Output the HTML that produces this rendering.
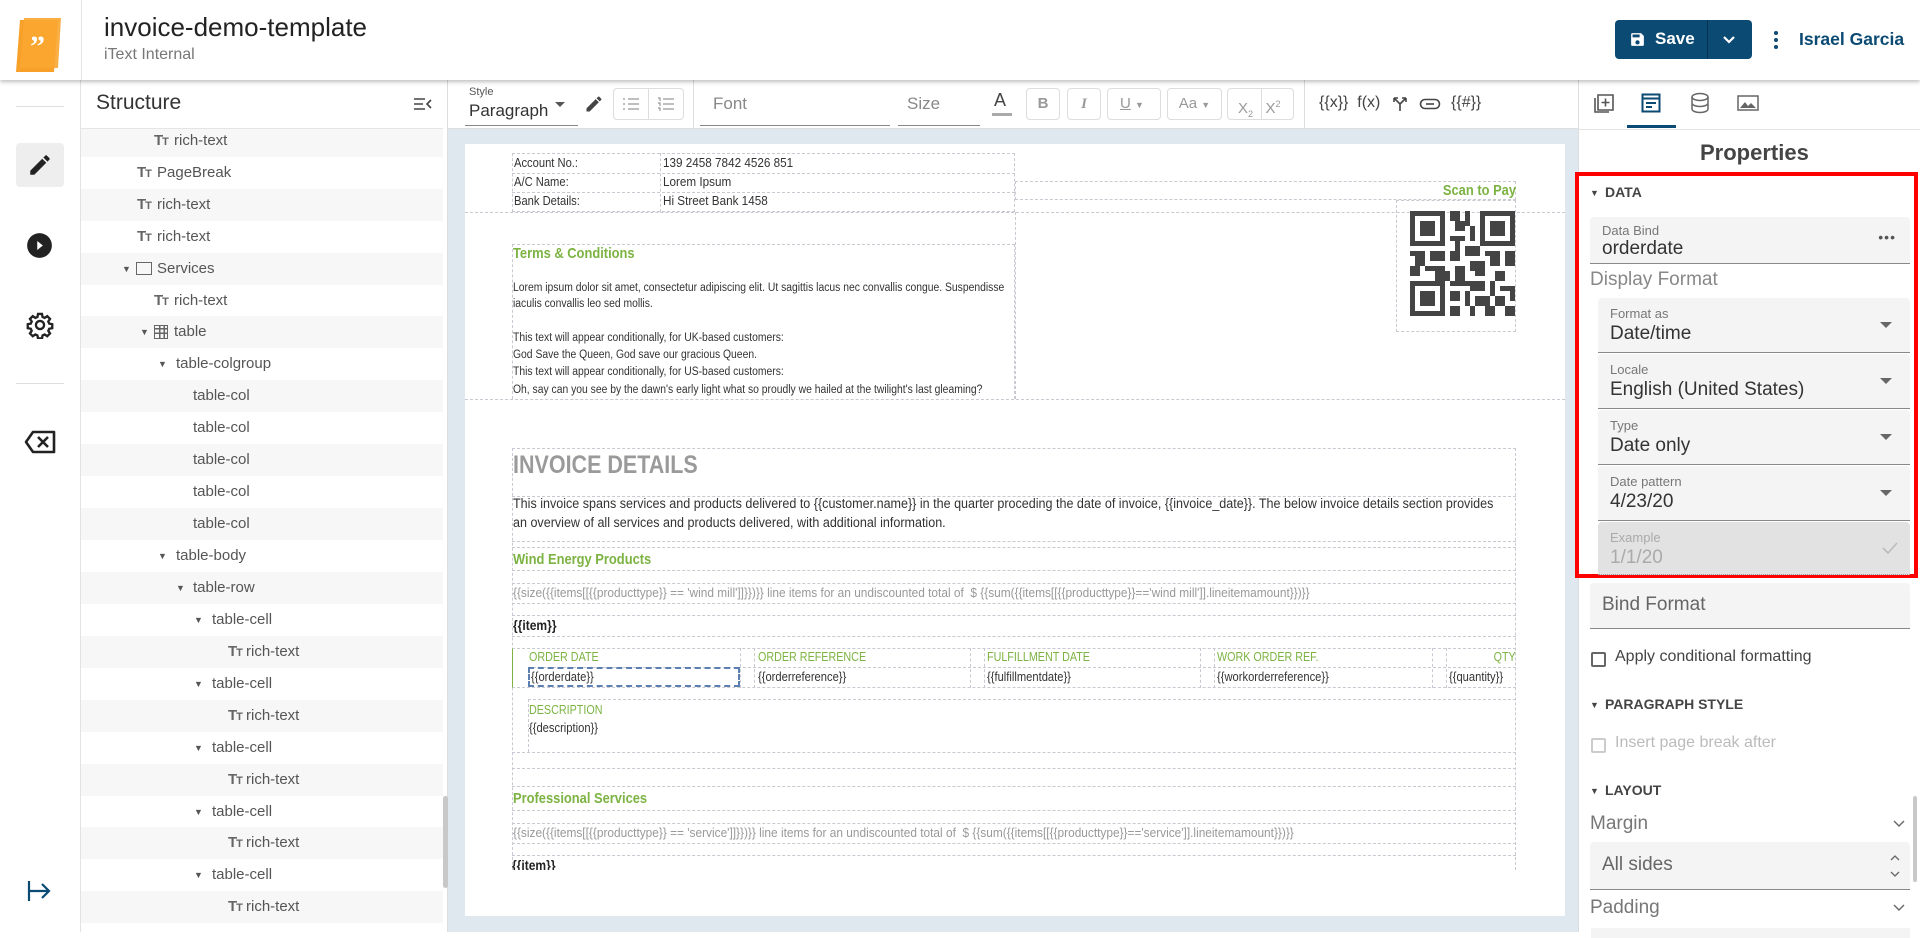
<!DOCTYPE html>
<html><head><meta charset="utf-8">
<style>
*{box-sizing:border-box;margin:0;padding:0}
body{width:1920px;height:932px;overflow:hidden;position:relative;font-family:"Liberation Sans",sans-serif;color:#333;background:#fff}
.a{position:absolute;white-space:nowrap}
.c{transform:scaleX(.86);transform-origin:left center}
.cr{transform:scaleX(.86);transform-origin:right center}
.d{position:absolute;border:1px dashed #c9c9d2}
.g{color:#7cb342;font-weight:bold}
.row{position:absolute;left:81px;width:362px;height:32px;font-size:15px;color:#555;line-height:32px}
.row.o{background:#f7f7f7}
.row span{position:absolute;top:0}
.ar{font-size:9px;color:#555}
.tt{font-weight:bold;color:#666;font-size:15px;letter-spacing:-1px}
.tt small{font-size:11px}
.fld{position:absolute;background:#f4f4f4;border-bottom:1px solid #888;border-radius:4px 4px 0 0}
.fld .l{position:absolute;left:16px;top:8px;font-size:13px;color:#777}
.fld .v{position:absolute;left:16px;top:25px;font-size:19px;color:#333}
.car{position:absolute;right:18px;top:24px;width:0;height:0;border-left:6px solid transparent;border-right:6px solid transparent;border-top:6px solid #666}
.tb{position:absolute;top:88px;height:32px;border:1px solid #ddd;border-radius:4px;color:#999;font-size:15px;text-align:center;line-height:30px}
.pc{font-size:13px;color:#333}
</style></head><body>

<!-- header -->
<div class="a" style="left:0;top:0;width:1920px;height:80px;background:#fff;box-shadow:0 2px 4px rgba(0,0,0,.25);z-index:2"></div>
<div class="a" style="left:81px;top:0;width:1px;height:80px;background:#e5e5e5;z-index:3"></div>
<svg class="a" style="left:16px;top:18px;z-index:3" width="46" height="54" viewBox="0 0 46 54"><path d="M4 2h38l-4 52H0z" fill="#f7a12b"/><path d="M8 0h37l-3 50H4z" fill="#f9a630" opacity=".9"/><text x="14" y="38" font-family="Liberation Serif" font-size="30" font-weight="bold" fill="#fff">”</text></svg>
<div class="a" style="left:104px;top:12px;font-size:26px;color:#222;z-index:3">invoice-demo-template</div>
<div class="a" style="left:104px;top:46px;font-size:16px;color:#777;z-index:3">iText Internal</div>
<div class="a" style="left:1615px;top:20px;width:137px;height:39px;background:#0b4a73;border-radius:4px;z-index:3"></div>
<div class="a" style="left:1707px;top:20px;width:1px;height:39px;background:#06314f;z-index:3"></div>
<svg class="a" style="left:1629px;top:31px;z-index:4" width="17" height="17" viewBox="0 0 24 24"><path fill="#fff" d="M17 3H5a2 2 0 0 0-2 2v14a2 2 0 0 0 2 2h14a2 2 0 0 0 2-2V7l-4-4zm-5 16a3 3 0 1 1 0-6 3 3 0 0 1 0 6zm3-10H5V5h10v4z"/></svg>
<div class="a" style="left:1655px;top:29px;font-size:17px;font-weight:bold;color:#fff;z-index:4">Save</div>
<svg class="a" style="left:1721px;top:33px;z-index:4" width="16" height="14" viewBox="0 0 16 14"><path d="M3 4l5 5 5-5" stroke="#fff" stroke-width="2.2" fill="none"/></svg>
<svg class="a" style="left:1772px;top:30px;z-index:4" width="8" height="20"><circle cx="4" cy="3" r="2" fill="#0b4a73"/><circle cx="4" cy="10" r="2" fill="#0b4a73"/><circle cx="4" cy="17" r="2" fill="#0b4a73"/></svg>
<div class="a" style="left:1799px;top:29px;font-size:17.5px;color:#0b4a73;font-weight:bold;z-index:4">Israel Garcia</div>

<!-- left rail -->
<div class="a" style="left:0;top:80px;width:81px;height:852px;background:#fff;border-right:1px solid #e3e3e3"></div>
<div class="a" style="left:16px;top:106px;width:48px;height:1px;background:#ddd"></div>
<div class="a" style="left:16px;top:143px;width:48px;height:44px;background:#eee;border-radius:4px"></div>
<svg class="a" style="left:27px;top:152px" width="26" height="26" viewBox="0 0 24 24"><path fill="#222" d="M3 17.25V21h3.75L17.8 9.94l-3.75-3.75L3 17.25zM20.7 7.04a1 1 0 0 0 0-1.41l-2.34-2.34a1 1 0 0 0-1.41 0l-1.83 1.83 3.75 3.75 1.83-1.83z"/></svg>
<svg class="a" style="left:26px;top:232px" width="27" height="27" viewBox="0 0 24 24"><circle cx="12" cy="12" r="11" fill="#222"/><path d="M10 8l5 4-5 4z" fill="#fff"/></svg>
<svg class="a" style="left:26px;top:311px" width="28" height="28" viewBox="0 0 24 24"><path fill="none" stroke="#222" stroke-width="2" d="M12 8.5a3.5 3.5 0 1 0 0 7 3.5 3.5 0 0 0 0-7zM10.3 2.5h3.4l.5 2.6 1.8.8 2.2-1.5 2.4 2.4-1.5 2.2.8 1.8 2.6.5v3.4l-2.6.5-.8 1.8 1.5 2.2-2.4 2.4-2.2-1.5-1.8.8-.5 2.6h-3.4l-.5-2.6-1.8-.8-2.2 1.5-2.4-2.4 1.5-2.2-.8-1.8-2.6-.5v-3.4l2.6-.5.8-1.8-1.5-2.2 2.4-2.4 2.2 1.5 1.8-.8z"/></svg>
<div class="a" style="left:16px;top:383px;width:48px;height:1px;background:#ddd"></div>
<svg class="a" style="left:24px;top:430px" width="32" height="24" viewBox="0 0 32 24"><path d="M9 2h21v20H9L2 12z" fill="none" stroke="#222" stroke-width="2.6" stroke-linejoin="round"/><path d="M14 7l10 10M24 7L14 17" stroke="#222" stroke-width="2.6"/></svg>
<svg class="a" style="left:26px;top:879px" width="28" height="24" viewBox="0 0 28 24"><path d="M3 2v20M3 12h20M16 5l7 7-7 7" stroke="#0b4a73" stroke-width="2.2" fill="none"/></svg>

<!-- structure panel -->
<div class="a" style="left:81px;top:80px;width:367px;height:852px;background:#fff;border-right:1px solid #ddd;overflow:hidden"></div>
<div class="a" style="left:96px;top:91px;font-size:21px;color:#333">Structure</div>
<svg class="a" style="left:413px;top:97px" width="20" height="14" viewBox="0 0 20 14"><path d="M1 2h11M1 7h9M1 12h11M18 3l-4 4 4 4" stroke="#444" stroke-width="1.6" fill="none"/></svg>
<div class="a" style="left:81px;top:128px;width:362px;height:1px;background:#e5e5e5"></div>
<div class="a" style="left:81px;top:129px;width:362px;height:803px;overflow:hidden">
<div style="position:relative;left:-81px;top:-129px">
<div class="row o" style="top:125px"><span class="tt" style="left:73px">T<small>T</small></span><span style="left:93px">rich-text</span></div>
<div class="row" style="top:157px"><span class="tt" style="left:56px">T<small>T</small></span><span style="left:76px">PageBreak</span></div>
<div class="row o" style="top:189px"><span class="tt" style="left:56px">T<small>T</small></span><span style="left:76px">rich-text</span></div>
<div class="row" style="top:221px"><span class="tt" style="left:56px">T<small>T</small></span><span style="left:76px">rich-text</span></div>
<div class="row o" style="top:253px"><span class="ar" style="left:41px">▼</span><span style="left:55px;top:9px;width:16px;height:13px;border:1.5px solid #666"></span><span style="left:76px">Services</span></div>
<div class="row" style="top:285px"><span class="tt" style="left:73px">T<small>T</small></span><span style="left:93px">rich-text</span></div>
<div class="row o" style="top:316px"><span class="ar" style="left:59px">▼</span><span style="left:73px;top:9px;width:14px;height:14px;border:1.5px solid #666;background:linear-gradient(90deg,transparent 4px,#666 4px,#666 5.5px,transparent 5.5px,transparent 8.5px,#666 8.5px,#666 10px,transparent 10px),linear-gradient(0deg,transparent 4px,#666 4px,#666 5.5px,transparent 5.5px,transparent 8.5px,#666 8.5px,#666 10px,transparent 10px)"></span><span style="left:93px">table</span></div>
<div class="row" style="top:348px"><span class="ar" style="left:77px">▼</span><span style="left:95px">table-colgroup</span></div>
<div class="row o" style="top:380px"><span style="left:112px">table-col</span></div>
<div class="row" style="top:412px"><span style="left:112px">table-col</span></div>
<div class="row o" style="top:444px"><span style="left:112px">table-col</span></div>
<div class="row" style="top:476px"><span style="left:112px">table-col</span></div>
<div class="row o" style="top:508px"><span style="left:112px">table-col</span></div>
<div class="row" style="top:540px"><span class="ar" style="left:77px">▼</span><span style="left:95px">table-body</span></div>
<div class="row o" style="top:572px"><span class="ar" style="left:95px">▼</span><span style="left:112px">table-row</span></div>
<div class="row" style="top:604px"><span class="ar" style="left:113px">▼</span><span style="left:131px">table-cell</span></div>
<div class="row o" style="top:636px"><span class="tt" style="left:147px">T<small>T</small></span><span style="left:165px">rich-text</span></div>
<div class="row" style="top:668px"><span class="ar" style="left:113px">▼</span><span style="left:131px">table-cell</span></div>
<div class="row o" style="top:700px"><span class="tt" style="left:147px">T<small>T</small></span><span style="left:165px">rich-text</span></div>
<div class="row" style="top:732px"><span class="ar" style="left:113px">▼</span><span style="left:131px">table-cell</span></div>
<div class="row o" style="top:764px"><span class="tt" style="left:147px">T<small>T</small></span><span style="left:165px">rich-text</span></div>
<div class="row" style="top:796px"><span class="ar" style="left:113px">▼</span><span style="left:131px">table-cell</span></div>
<div class="row o" style="top:827px"><span class="tt" style="left:147px">T<small>T</small></span><span style="left:165px">rich-text</span></div>
<div class="row" style="top:859px"><span class="ar" style="left:113px">▼</span><span style="left:131px">table-cell</span></div>
<div class="row o" style="top:891px"><span class="tt" style="left:147px">T<small>T</small></span><span style="left:165px">rich-text</span></div>
</div></div>
<div class="a" style="left:443px;top:796px;width:5px;height:92px;background:#c8c8c8;border-radius:3px"></div>

<!-- canvas -->
<div class="a" style="left:448px;top:129px;width:1130px;height:803px;background:#dfe7ef"></div>
<!-- toolbar -->
<div class="a" style="left:448px;top:80px;width:1130px;height:49px;background:#fff;border-bottom:1px solid #ddd"></div>
<div class="a" style="left:469px;top:86px;font-size:11px;color:#555">Style</div>
<div class="a" style="left:469px;top:101px;font-size:17px;color:#333">Paragraph</div>
<div class="a" style="left:465px;top:125px;width:113px;height:1px;background:#888"></div>
<div class="a" style="left:555px;top:102px;border-left:5px solid transparent;border-right:5px solid transparent;border-top:5px solid #555"></div>
<svg class="a" style="left:584px;top:94px" width="20" height="20" viewBox="0 0 24 24"><path fill="#444" d="M3 17.25V21h3.75L17.8 9.94l-3.75-3.75L3 17.25zM20.7 7.04a1 1 0 0 0 0-1.41l-2.34-2.34a1 1 0 0 0-1.41 0l-1.83 1.83 3.75 3.75 1.83-1.83z"/></svg>
<div class="tb" style="left:613px;width:71px"></div>
<div class="a" style="left:648px;top:88px;width:1px;height:32px;background:#ddd"></div>
<svg class="a" style="left:622px;top:96px" width="18" height="16"><path d="M1 3h2M6 3h11M1 8h2M6 8h11M1 13h2M6 13h11" stroke="#999" stroke-width="1.3"/></svg>
<svg class="a" style="left:657px;top:96px" width="18" height="16"><path d="M1 2h2v3M1 7h2v3M1 12h2v3M6 3h11M6 8h11M6 13h11" stroke="#999" stroke-width="1.2" fill="none"/></svg>
<div class="a" style="left:693px;top:80px;width:1px;height:48px;background:#ddd"></div>
<div class="a" style="left:713px;top:94px;font-size:17px;color:#888">Font</div>
<div class="a" style="left:700px;top:125px;width:190px;height:1px;background:#888"></div>
<div class="a" style="left:907px;top:94px;font-size:17px;color:#888">Size</div>
<div class="a" style="left:898px;top:125px;width:82px;height:1px;background:#888"></div>
<div class="a" style="left:994px;top:90px;font-size:18px;color:#444">A</div>
<div class="a" style="left:992px;top:113px;width:20px;height:3px;background:#aaa"></div>
<div class="tb" style="left:1026px;width:34px;font-weight:bold">B</div>
<div class="tb" style="left:1067px;width:34px;font-style:italic;font-weight:bold;font-family:'Liberation Serif'">I</div>
<div class="tb" style="left:1107px;width:54px;text-align:left;padding-left:12px"><u>U</u> <span style="font-size:9px">▼</span></div>
<div class="tb" style="left:1167px;width:55px">Aa <span style="font-size:9px">▼</span></div>
<div class="tb" style="left:1227px;width:67px;text-align:left;padding-left:10px">X<sub style="font-size:9px">2</sub>&nbsp;&nbsp; X<sup style="font-size:9px">2</sup></div>
<div class="a" style="left:1261px;top:88px;width:1px;height:32px;background:#ddd"></div>
<div class="a" style="left:1304px;top:80px;width:1px;height:48px;background:#ddd"></div>
<div class="a" style="left:1319px;top:94px;font-size:16px;color:#444">{{x}}&nbsp; f(x)</div>
<svg class="a" style="left:1391px;top:95px" width="18" height="18" viewBox="0 0 18 18"><path d="M3 3l6 6v7M15 3l-6 6M3 3h4M3 3v4M15 3h-4M15 3v4" stroke="#444" stroke-width="1.6" fill="none"/></svg>
<svg class="a" style="left:1419px;top:98px" width="22" height="12" viewBox="0 0 22 12"><rect x="1.5" y="1.5" width="19" height="9" rx="4.5" fill="none" stroke="#444" stroke-width="1.6"/><path d="M7 6h8" stroke="#444" stroke-width="1.6"/></svg>
<div class="a" style="left:1451px;top:94px;font-size:16px;color:#444">{{#}}</div>

<!-- page -->
<div class="a" style="left:465px;top:144px;width:1100px;height:772px;background:#fff"></div>
<div class="d" style="left:512px;top:153px;width:503px;height:59px"></div>
<div class="d" style="left:512px;top:173px;width:503px;height:20px;border-left:none;border-right:none"></div>
<div class="d" style="left:660px;top:153px;width:1px;height:59px;border-width:0 0 0 1px"></div>
<div class="a pc c" style="left:514px;top:155px">Account No.:</div>
<div class="a pc c" style="left:663px;top:155px;transform:scaleX(.9)">139 2458 7842 4526 851</div>
<div class="a pc c" style="left:514px;top:174px">A/C Name:</div>
<div class="a pc c" style="left:663px;top:174px;transform:scaleX(.9)">Lorem Ipsum</div>
<div class="a pc c" style="left:514px;top:193px">Bank Details:</div>
<div class="a pc c" style="left:663px;top:193px;transform:scaleX(.9)">Hi Street Bank 1458</div>
<div class="d" style="left:1015px;top:181px;width:501px;height:19px"></div>
<div class="a g cr" style="right:404px;top:182px;font-size:15px">Scan to Pay</div>
<div class="d" style="left:465px;top:212px;width:1100px;height:1px;border-width:1px 0 0 0"></div>
<div class="d" style="left:1396px;top:200px;width:120px;height:132px"></div>
<svg class="a" style="left:1410px;top:211px" width="105" height="105" viewBox="0 0 21 21" shape-rendering="crispEdges"><g fill="#444">
<path d="M0 0h7v7H0zM14 0h7v7h-7zM0 14h7v7H0z"/>
</g><g fill="#fff"><path d="M1 1h5v5H1zM15 1h5v5h-5zM1 15h5v5H1z"/></g><g fill="#444"><path d="M2 2h3v3H2zM16 2h3v3h-3zM2 16h3v3H2z"/>
<path d="M8 0h2v2H8zM11 0h1v3h-1zM9 2h2v2H9zM12 3h1v3h-1zM8 5h3v1H8zM9 6h1v2H9zM0 8h3v1H0zM4 8h3v2H4zM1 9h2v2H1zM8 8h2v2H8zM11 7h3v2h-3zM15 8h3v1h-3zM19 8h2v3h-2zM16 9h2v2h-2zM12 10h3v2h-3zM0 11h2v2H0zM3 11h4v1H3zM5 12h3v2H5zM9 11h2v3H9zM13 12h2v1h-2zM17 12h2v2h-2zM8 14h4v1H8zM12 14h3v2h-3zM16 14h1v3h-1zM18 15h3v1h-3zM8 16h2v2H8zM11 16h1v3h-1zM13 17h3v2h-3zM17 17h2v2h-2zM19 19h2v2h-2zM8 19h2v2H8zM12 19h1v2h-1zM15 19h2v2h-2zM20 16h1v2h-1z"/></g></svg>
<div class="d" style="left:512px;top:244px;width:503px;height:155px;border-bottom:none"></div>
<div class="a g c" style="left:513px;top:245px;font-size:15px">Terms &amp; Conditions</div>
<div class="a c" style="left:513px;top:282px;font-size:11.5px;color:#333;transform:scaleX(.9)">Lorem ipsum dolor sit amet, consectetur adipiscing elit. Ut sagittis lacus nec convallis congue. Suspendisse</div>
<div class="a c" style="left:513px;top:298px;font-size:11.5px;color:#333;transform:scaleX(.9)">iaculis convallis leo sed mollis.</div>
<div class="a c" style="left:513px;top:332px;font-size:11.5px;color:#333;transform:scaleX(.9)">This text will appear conditionally, for UK-based customers:</div>
<div class="a c" style="left:513px;top:349px;font-size:11.5px;color:#333;transform:scaleX(.9)">God Save the Queen, God save our gracious Queen.</div>
<div class="a c" style="left:513px;top:366px;font-size:11.5px;color:#333;transform:scaleX(.9)">This text will appear conditionally, for US-based customers:</div>
<div class="a c" style="left:513px;top:384px;font-size:11.5px;color:#333;transform:scaleX(.9)">Oh, say can you see by the dawn's early light what so proudly we hailed at the twilight's last gleaming?</div>
<div class="d" style="left:465px;top:399px;width:1100px;height:1px;border-width:1px 0 0 0"></div>
<div class="d" style="left:1015px;top:212px;width:1px;height:187px;border-width:0 0 0 1px"></div>

<div class="d" style="left:512px;top:448px;width:1004px;height:422px;border-bottom:none"></div>
<div class="d" style="left:512px;top:496px;width:1004px;height:46px;border-left:none;border-right:none"></div>
<div class="a c" style="left:513px;top:451px;font-size:25px;font-weight:bold;color:#9a9a9a">INVOICE DETAILS</div>
<div class="a c" style="left:513px;top:496px;font-size:13.5px;color:#333;transform:scaleX(.93)">This invoice spans services and products delivered to {{customer.name}} in the quarter proceding the date of invoice, {{invoice_date}}. The below invoice details section provides</div>
<div class="a c" style="left:513px;top:515px;font-size:13.5px;color:#333;transform:scaleX(.93)">an overview of all services and products delivered, with additional information.</div>
<div class="d" style="left:512px;top:547px;width:1004px;height:24px;border-left:none;border-right:none"></div>
<div class="a g c" style="left:513px;top:551px;font-size:15px">Wind Energy Products</div>
<div class="d" style="left:512px;top:583px;width:1004px;height:21px;border-left:none;border-right:none"></div>
<div class="a c" style="left:513px;top:586px;font-size:12.5px;color:#999;transform:scaleX(.95)">{{size({{items[[{{producttype}} == 'wind mill']]}})}} line items for an undiscounted total of&nbsp; $ {{sum({{items[[{{producttype}}=='wind mill']].lineitemamount}})}}</div>
<div class="d" style="left:512px;top:615px;width:1004px;height:22px;border-left:none;border-right:none"></div>
<div class="a c" style="left:513px;top:617px;font-size:14px;font-weight:bold;color:#222">{{item}}</div>
<div class="d" style="left:512px;top:648px;width:1004px;height:40px;border-right:none;border-left:1px solid #7cb342"></div>
<div class="d" style="left:528px;top:667px;width:988px;height:1px;border-width:1px 0 0 0"></div>
<div class="d" style="left:740px;top:648px;width:15px;height:40px;border-top:none;border-bottom:none"></div>
<div class="d" style="left:970px;top:648px;width:15px;height:40px;border-top:none;border-bottom:none"></div>
<div class="d" style="left:1200px;top:648px;width:15px;height:40px;border-top:none;border-bottom:none"></div>
<div class="d" style="left:1432px;top:648px;width:15px;height:40px;border-top:none;border-bottom:none"></div>
<div class="a c" style="left:529px;top:650px;font-size:12.5px;color:#7cb342">ORDER DATE</div>
<div class="a c" style="left:758px;top:650px;font-size:12.5px;color:#7cb342">ORDER REFERENCE</div>
<div class="a c" style="left:987px;top:650px;font-size:12.5px;color:#7cb342">FULFILLMENT DATE</div>
<div class="a c" style="left:1217px;top:650px;font-size:12.5px;color:#7cb342">WORK ORDER REF.</div>
<div class="a cr" style="right:404px;top:650px;font-size:12.5px;color:#7cb342">QTY</div>
<div class="a" style="left:528px;top:667px;width:212px;height:20px;border:2px dashed #5a7fb0"></div>
<div class="a c pc" style="left:531px;top:669px">{{orderdate}}</div>
<div class="a c pc" style="left:758px;top:669px">{{orderreference}}</div>
<div class="a c pc" style="left:987px;top:669px">{{fulfillmentdate}}</div>
<div class="a c pc" style="left:1217px;top:669px">{{workorderreference}}</div>
<div class="a c pc" style="left:1449px;top:669px">{{quantity}}</div>
<div class="d" style="left:528px;top:699px;width:988px;height:53px;border-right:none;border-bottom:none"></div>
<div class="a c" style="left:529px;top:703px;font-size:12.5px;color:#7cb342">DESCRIPTION</div>
<div class="a c pc" style="left:529px;top:720px">{{description}}</div>
<div class="d" style="left:512px;top:752px;width:1004px;height:17px;border-left:none;border-right:none"></div>
<div class="d" style="left:512px;top:786px;width:1004px;height:25px;border-left:none;border-right:none"></div>
<div class="a g c" style="left:513px;top:790px;font-size:15px">Professional Services</div>
<div class="d" style="left:512px;top:823px;width:1004px;height:21px;border-left:none;border-right:none"></div>
<div class="a c" style="left:513px;top:826px;font-size:12.5px;color:#999;transform:scaleX(.95)">{{size({{items[[{{producttype}} == 'service']]}})}} line items for an undiscounted total of&nbsp; $ {{sum({{items[[{{producttype}}=='service']].lineitemamount}})}}</div>
<div class="d" style="left:512px;top:855px;width:1004px;height:1px;border-width:1px 0 0 0"></div>
<div class="a" style="left:512px;top:856px;width:200px;height:14px;overflow:hidden"><div class="c" style="font-size:14px;font-weight:bold;color:#222;margin-top:1px">{{item}}</div></div>

<!-- right panel -->
<div class="a" style="left:1578px;top:80px;width:342px;height:852px;background:#fff;border-left:1px solid #ddd"></div>
<div class="a" style="left:1579px;top:129px;width:341px;height:1px;background:#e3e3e3"></div>
<svg class="a" style="left:1593px;top:92px" width="22" height="22" viewBox="0 0 22 22"><path d="M5 3h15v15H5z" fill="none" stroke="#555" stroke-width="1.6"/><path d="M2 6v14h14" fill="none" stroke="#555" stroke-width="1.6"/><path d="M12.5 6.5v8M8.5 10.5h8" stroke="#555" stroke-width="1.6"/></svg>
<svg class="a" style="left:1641px;top:93px" width="20" height="20" viewBox="0 0 20 20"><rect x="1.5" y="1.5" width="17" height="17" fill="none" stroke="#0b4a73" stroke-width="2"/><path d="M1.5 5.5h17M5 10h10M5 14h6" stroke="#0b4a73" stroke-width="2"/></svg>
<div class="a" style="left:1627px;top:125px;width:49px;height:3px;background:#0b4a73"></div>
<svg class="a" style="left:1690px;top:92px" width="20" height="22" viewBox="0 0 20 22"><ellipse cx="10" cy="5" rx="8" ry="3.5" fill="none" stroke="#666" stroke-width="1.5"/><path d="M2 5v12c0 2 3.6 3.5 8 3.5s8-1.5 8-3.5V5M2 11c0 2 3.6 3.5 8 3.5s8-1.5 8-3.5" fill="none" stroke="#666" stroke-width="1.5"/></svg>
<svg class="a" style="left:1737px;top:95px" width="22" height="16" viewBox="0 0 22 16"><rect x="1" y="1" width="20" height="14" fill="none" stroke="#666" stroke-width="1.5"/><path d="M3 13l5-6 3 4 3-3 5 5z" fill="#666"/></svg>
<div class="a" style="left:1700px;top:140px;font-size:22px;font-weight:bold;color:#444">Properties</div>

<div class="a" style="left:1575px;top:172px;width:343px;height:406px;border:4px solid #f00"></div>
<div class="a" style="left:1590px;top:188px;font-size:9px;color:#444">▼</div>
<div class="a" style="left:1605px;top:184px;font-size:14px;font-weight:bold;color:#444">DATA</div>
<div class="fld" style="left:1590px;top:217px;width:320px;height:47px"><div class="l" style="left:12px;top:6px">Data Bind</div><div class="v" style="left:12px;top:21px;font-size:19px">orderdate</div><div class="a" style="right:14px;top:12px;font-size:14px;color:#555;letter-spacing:1px">•••</div></div>
<div class="a" style="left:1590px;top:269px;font-size:19px;color:#888">Display Format</div>
<div class="fld" style="left:1598px;top:298px;width:312px;height:55px"><div class="l" style="left:12px">Format as</div><div class="v" style="left:12px">Date/time</div><div class="car"></div></div>
<div class="fld" style="left:1598px;top:354px;width:312px;height:55px"><div class="l" style="left:12px">Locale</div><div class="v" style="left:12px">English (United States)</div><div class="car"></div></div>
<div class="fld" style="left:1598px;top:410px;width:312px;height:55px"><div class="l" style="left:12px">Type</div><div class="v" style="left:12px">Date only</div><div class="car"></div></div>
<div class="fld" style="left:1598px;top:466px;width:312px;height:55px"><div class="l" style="left:12px">Date pattern</div><div class="v" style="left:12px">4/23/20</div><div class="car"></div></div>
<div class="fld" style="left:1598px;top:522px;width:312px;height:53px;background:#e2e2e2;border-bottom:1px dotted #999"><div class="l" style="left:12px;color:#aaa">Example</div><div class="v" style="left:12px;color:#aaa">1/1/20</div><svg class="a" style="right:12px;top:20px" width="16" height="12"><path d="M1 6l5 5 9-10" stroke="#bbb" stroke-width="1.6" fill="none"/></svg></div>
<div class="fld" style="left:1590px;top:583px;width:320px;height:46px"><div class="v" style="left:12px;top:11px;color:#666">Bind Format</div></div>
<div class="a" style="left:1591px;top:652px;width:15px;height:15px;border:2px solid #666;border-radius:2px"></div>
<div class="a" style="left:1615px;top:648px;font-size:16px;color:#444">Apply conditional formatting</div>
<div class="a" style="left:1590px;top:700px;font-size:9px;color:#444">▼</div>
<div class="a" style="left:1605px;top:696px;font-size:14px;font-weight:bold;color:#444">PARAGRAPH STYLE</div>
<div class="a" style="left:1591px;top:738px;width:15px;height:15px;border:2px solid #ccc;border-radius:2px"></div>
<div class="a" style="left:1615px;top:734px;font-size:16px;color:#bbb">Insert page break after</div>
<div class="a" style="left:1590px;top:786px;font-size:9px;color:#444">▼</div>
<div class="a" style="left:1605px;top:782px;font-size:14px;font-weight:bold;color:#444">LAYOUT</div>
<div class="a" style="left:1590px;top:813px;font-size:19px;color:#777">Margin</div>
<svg class="a" style="left:1893px;top:820px" width="12" height="8"><path d="M1 1l5 5 5-5" stroke="#666" stroke-width="1.4" fill="none"/></svg>
<div class="fld" style="left:1590px;top:842px;width:320px;height:48px"><div class="v" style="left:12px;top:12px;color:#666">All sides</div><svg class="a" style="right:10px;top:13px" width="10" height="22"><path d="M1 5l4-4 4 4M1 17l4 4 4-4" stroke="#666" stroke-width="1.3" fill="none"/></svg></div>
<div class="a" style="left:1590px;top:897px;font-size:19px;color:#777">Padding</div>
<svg class="a" style="left:1893px;top:904px" width="12" height="8"><path d="M1 1l5 5 5-5" stroke="#666" stroke-width="1.4" fill="none"/></svg>
<div class="a" style="left:1591px;top:928px;width:319px;height:10px;background:#f4f4f4"></div>
<div class="a" style="left:1913px;top:796px;width:4px;height:86px;background:#c8c8c8;border-radius:2px"></div>
</body></html>
